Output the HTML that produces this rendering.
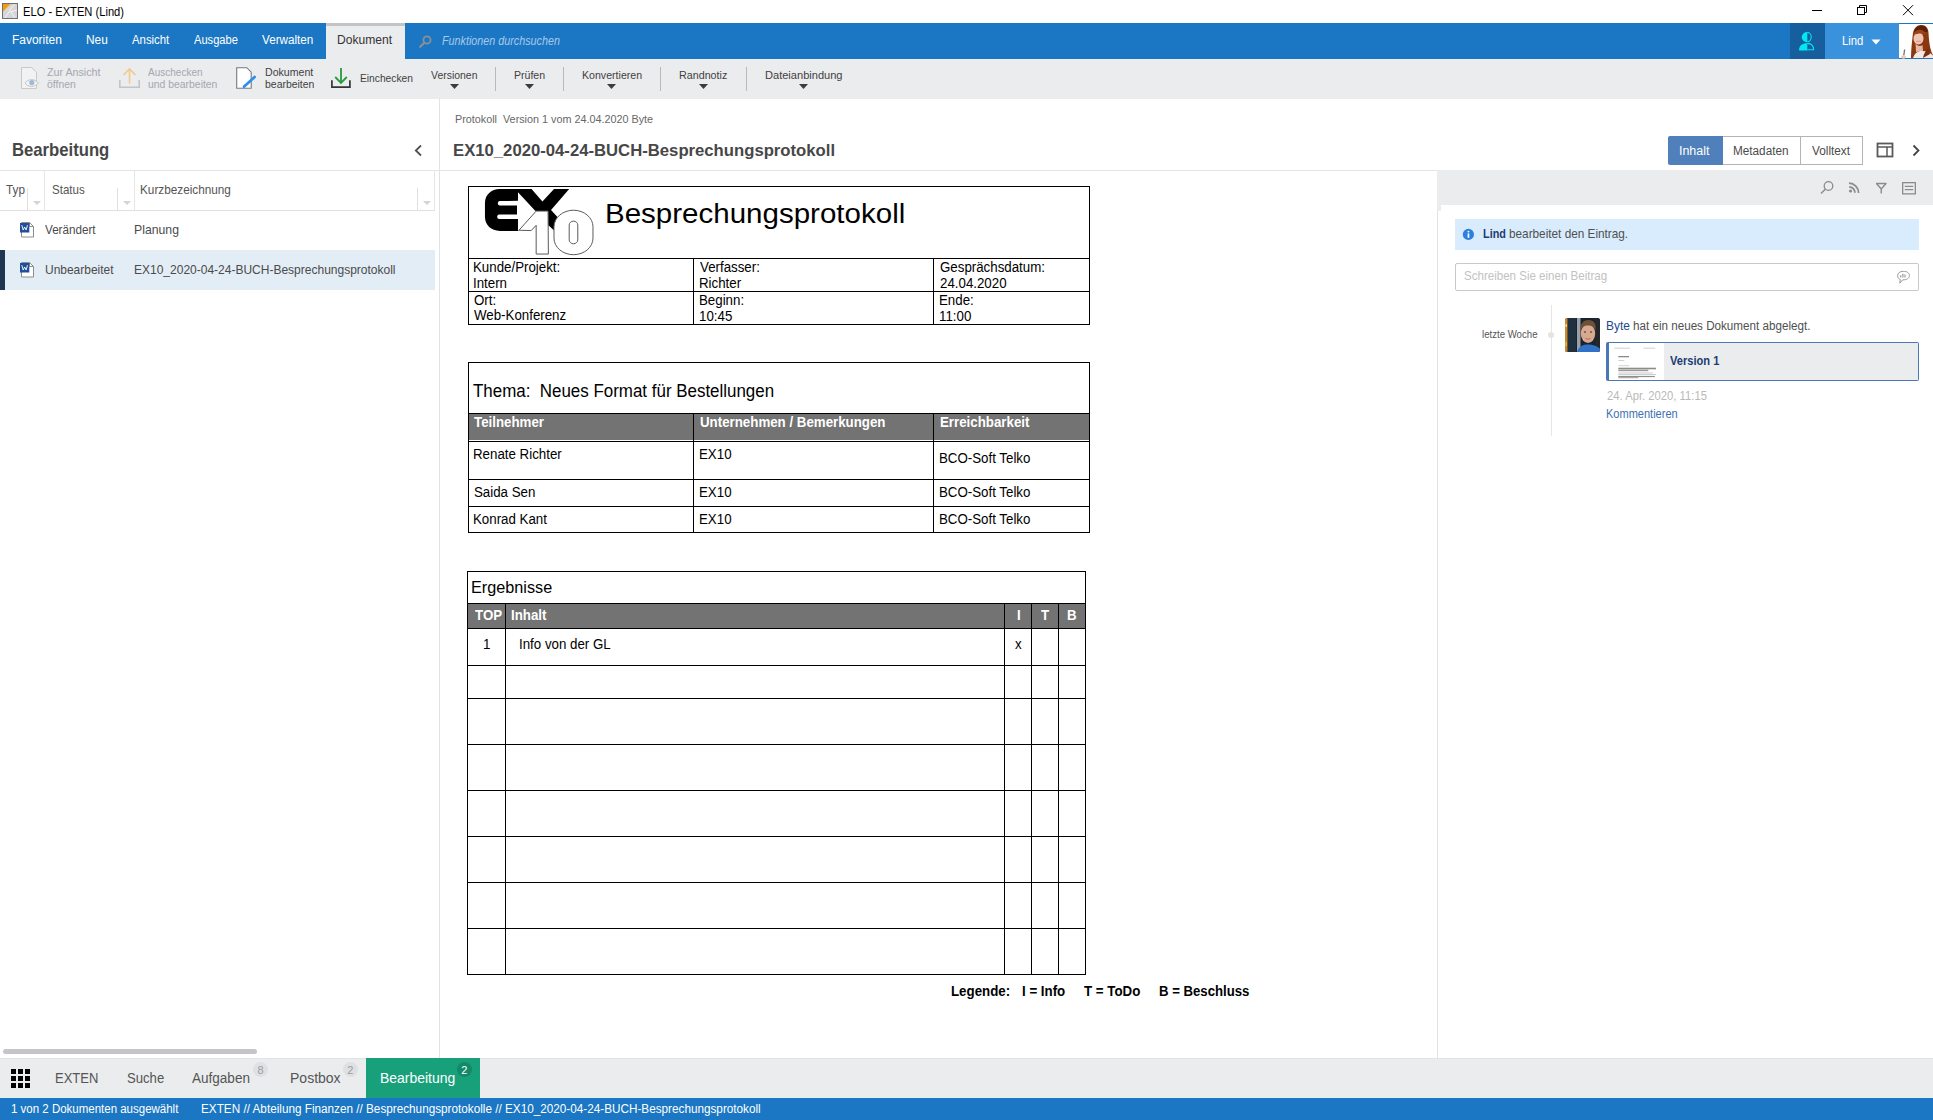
<!DOCTYPE html>
<html><head><meta charset="utf-8"><title>ELO - EXTEN (Lind)</title>
<style>
html,body{margin:0;padding:0;}
body{width:1933px;height:1120px;position:relative;overflow:hidden;background:#fff;font-family:"Liberation Sans",sans-serif;}
.t{position:absolute;white-space:pre;line-height:0;transform-origin:0 0;}
svg{position:absolute;overflow:visible;}
</style></head><body>
<svg style="left:2px;top:3px" width="16" height="16" viewBox="0 0 16 16">
<rect x="0.5" y="0.5" width="15" height="15" fill="#d6d6d6" stroke="#707070" stroke-width="1"/>
<path d="M1 1 H8.5 L1 8.5 Z" fill="#f39c12"/>
<path d="M3 15 L10 4 M8 9 L15 7 M10 4 L13 1.5 M9 9 L13 15" stroke="#f4f4f4" stroke-width="1" fill="none"/>
</svg>
<div class="t" style="left:22.59px;top:12.00px;font-size:12.3px;color:#000;transform:scaleX(0.9067)">ELO - EXTEN (Lind)</div>
<div style="position:absolute;left:1812px;top:10px;width:10px;height:1px;background:#000;"></div>
<svg style="left:1856px;top:5px" width="12" height="11" viewBox="0 0 12 11">
<rect x="1.5" y="2.5" width="7" height="7" fill="none" stroke="#000" stroke-width="1"/>
<path d="M3.5 2.5 V0.5 H10.5 V7.5 H8.5" fill="none" stroke="#000" stroke-width="1"/>
</svg>
<svg style="left:1902px;top:5px" width="12" height="11" viewBox="0 0 12 11">
<path d="M1 0.2 L11 10.2 M11 0.2 L1 10.2" stroke="#000" stroke-width="1" fill="none"/>
</svg>
<div style="position:absolute;left:0px;top:23px;width:1933px;height:36px;background:#1b77c3;"></div>
<div class="t" style="left:11.53px;top:40.00px;font-size:12.3px;color:#ffffff;transform:scaleX(0.9718)">Favoriten</div>
<div class="t" style="left:85.53px;top:40.00px;font-size:12.3px;color:#ffffff;transform:scaleX(0.9669)">Neu</div>
<div class="t" style="left:132.20px;top:40.00px;font-size:12.3px;color:#ffffff;transform:scaleX(0.9240)">Ansicht</div>
<div class="t" style="left:194.00px;top:40.00px;font-size:12.3px;color:#ffffff;transform:scaleX(0.9034)">Ausgabe</div>
<div class="t" style="left:262.00px;top:40.00px;font-size:12.3px;color:#ffffff;transform:scaleX(0.9490)">Verwalten</div>
<div style="position:absolute;left:326px;top:23px;width:79px;height:36px;background:#ebecee;"></div>
<div style="position:absolute;left:326px;top:23px;width:79px;height:3px;background:#c4c4c4;"></div>
<div class="t" style="left:337.32px;top:40.00px;font-size:12.3px;color:#333333;transform:scaleX(0.9815)">Dokument</div>
<svg style="left:419px;top:35px" width="13" height="13" viewBox="0 0 13 13">
<circle cx="8" cy="5" r="3.6" fill="none" stroke="#8c8f93" stroke-width="1.8"/>
<path d="M5.3 7.7 L1.2 11.8" stroke="#8c8f93" stroke-width="2.2" stroke-linecap="round"/>
</svg>
<div class="t" style="left:442.20px;top:40.70px;font-size:12.3px;color:#a9c9ec;font-style:italic;transform:scaleX(0.8752)">Funktionen durchsuchen</div>
<div style="position:absolute;left:1790px;top:23px;width:35px;height:36px;background:#165e9e;"></div>
<svg style="left:1796px;top:30px" width="22" height="22" viewBox="0 0 22 22">
<path d="M11.3 2 A5.6 5.1 0 0 0 11.3 12.2 Z" fill="#00e8f2"/>
<path d="M11.3 2.4 A3.9 4.7 0 0 1 11.3 11.8" fill="none" stroke="#00e8f2" stroke-width="1.1"/>
<path d="M11.3 13.2 C6 13.2 3 15.5 3 20.4 H11.3 Z" fill="#00e8f2"/>
<path d="M11.3 13.4 C15.5 13.6 17.6 15.8 17.6 19.8 H11.3" fill="none" stroke="#00e8f2" stroke-width="1.1"/>
</svg>
<div style="position:absolute;left:1825px;top:23px;width:74px;height:36px;background:#3a91dc;"></div>
<div class="t" style="left:1841.58px;top:41.00px;font-size:12.3px;color:#ffffff;transform:scaleX(0.9192)">Lind</div>
<svg style="left:1871px;top:39px" width="10" height="6" viewBox="0 0 10 6"><path d="M0.5 0.5 H9.5 L5 5.5 Z" fill="#fff"/></svg>
<div style="position:absolute;left:1899px;top:24px;width:34px;height:34px;background:#ffffff;"></div>
<svg style="left:1899px;top:24px" width="34" height="34" viewBox="0 0 34 34">
<path d="M12 34 C12 26 13 17 14 9 C15 4 18 1 22 1 C27 1 29.5 4.5 29.5 9 C30 17 31 26 34 31 V34 Z" fill="#8a3810"/>
<path d="M15 8 C16 3.5 19 1.5 22.5 1.5 C26 1.5 28.5 4 28.5 8 Z" fill="#5e1f06"/>
<ellipse cx="19.5" cy="14.5" rx="5" ry="6" fill="#efc6b4"/>
<path d="M14.5 11 C15.5 7 18 5.5 21.5 5.8 C24.5 6 26 8 26.5 10.5 C23 9 18.5 9.5 14.5 11 Z" fill="#9a4518"/>
<path d="M16.5 19 C18 22 21 23 23.5 21 L24 27 L17 28 Z" fill="#e7b8a5"/>
<rect x="17" y="16.8" width="5" height="1.3" rx="0.6" fill="#e09a9a"/>
<path d="M14 34 C15.5 29.5 18.5 27 23 27 C28 27 31.5 29 34 31.5 V34 Z" fill="#f3e8e6"/>
<path d="M24 34 C25 29 27 26 29.5 24 L31 30 Z" fill="#7a2e0a"/>
<path d="M5.6 25.5 L4.8 31.5" stroke="#6a6e77" stroke-width="1.3"/>
<ellipse cx="4.5" cy="33" rx="2.6" ry="1.8" fill="#f0c9bb"/>
</svg>
<div style="position:absolute;left:0px;top:59px;width:1933px;height:40px;background:#ebecee;"></div>
<svg style="left:20px;top:66px" width="22" height="24" viewBox="0 0 22 24">
<path d="M1.5 1.5 H11.5 L16.5 6 V22.5 H1.5 Z" fill="#f2f2f3" stroke="#c9c9c9" stroke-width="1"/>
<path d="M5 17 C8 12.5 15 12.5 18.5 17 C15 21.5 8 21.5 5 17 Z" fill="#f3f3f3" stroke="#c5c5c5" stroke-width="1"/>
<circle cx="11.8" cy="16.6" r="2.6" fill="#9dbbd8"/>
</svg>
<div class="t" style="left:47.30px;top:71.60px;font-size:11.8px;color:#a6a6ae;transform:scaleX(0.9059)">Zur Ansicht</div>
<div class="t" style="left:47.30px;top:83.50px;font-size:11.8px;color:#a6a6ae;transform:scaleX(0.8837)">öffnen</div>
<svg style="left:118px;top:67px" width="23" height="23" viewBox="0 0 23 23">
<path d="M11.5 2 V16.5 M5.5 8 L11.5 2 L17.5 8" fill="none" stroke="#f2c98e" stroke-width="1.6"/>
<path d="M1.8 13 V20.2 H21.2 V13" fill="none" stroke="#c4c4c4" stroke-width="1.6"/>
</svg>
<div class="t" style="left:148.40px;top:72.30px;font-size:11.8px;color:#a6a6ae;transform:scaleX(0.8492)">Auschecken</div>
<div class="t" style="left:148.40px;top:83.70px;font-size:11.8px;color:#a6a6ae;transform:scaleX(0.8816)">und bearbeiten</div>
<svg style="left:235px;top:66px" width="24" height="24" viewBox="0 0 24 24">
<path d="M1.7 1.7 H11.8 L16.2 6.2 V22.2 H1.7 Z" fill="#ffffff" stroke="#7a7a7a" stroke-width="1.1"/>
<path d="M9.2 20.6 L19.6 10.9" stroke="#2b8ef0" stroke-width="2.7" stroke-linecap="round"/>
<path d="M7.6 22.2 L8.3 20 L9.9 21.6 Z" fill="#2b8ef0"/>
</svg>
<div class="t" style="left:264.50px;top:72.30px;font-size:11.8px;color:#3f3f3f;transform:scaleX(0.8974)">Dokument</div>
<div class="t" style="left:264.50px;top:83.70px;font-size:11.8px;color:#3f3f3f;transform:scaleX(0.8860)">bearbeiten</div>
<svg style="left:330px;top:66px" width="23" height="24" viewBox="0 0 23 24">
<path d="M11 2 V17 M5.2 11 L11 17 L16.8 11" fill="none" stroke="#2c9a3e" stroke-width="1.8"/>
<path d="M1.9 14.2 V21.2 H19.9 V14.2" fill="none" stroke="#353535" stroke-width="1.7"/>
</svg>
<div class="t" style="left:360.30px;top:78.40px;font-size:11.8px;color:#3f3f3f;transform:scaleX(0.8671)">Einchecken</div>
<div class="t" style="left:431.00px;top:75.00px;font-size:11.8px;color:#3f3f3f;transform:scaleX(0.8862)">Versionen</div>
<svg style="left:449.5px;top:84px" width="9" height="5" viewBox="0 0 9 5"><path d="M0 0 H9 L4.5 5 Z" fill="#3c3c3c"/></svg>
<div class="t" style="left:514.20px;top:75.00px;font-size:11.8px;color:#3f3f3f;transform:scaleX(0.8948)">Prüfen</div>
<svg style="left:525.0px;top:84px" width="9" height="5" viewBox="0 0 9 5"><path d="M0 0 H9 L4.5 5 Z" fill="#3c3c3c"/></svg>
<div class="t" style="left:582.00px;top:75.00px;font-size:11.8px;color:#3f3f3f;transform:scaleX(0.8986)">Konvertieren</div>
<svg style="left:607.3px;top:84px" width="9" height="5" viewBox="0 0 9 5"><path d="M0 0 H9 L4.5 5 Z" fill="#3c3c3c"/></svg>
<div class="t" style="left:679.40px;top:75.00px;font-size:11.8px;color:#3f3f3f;transform:scaleX(0.9094)">Randnotiz</div>
<svg style="left:699.0999999999999px;top:84px" width="9" height="5" viewBox="0 0 9 5"><path d="M0 0 H9 L4.5 5 Z" fill="#3c3c3c"/></svg>
<div class="t" style="left:765.00px;top:75.00px;font-size:11.8px;color:#3f3f3f;transform:scaleX(0.9380)">Dateianbindung</div>
<svg style="left:799.0px;top:84px" width="9" height="5" viewBox="0 0 9 5"><path d="M0 0 H9 L4.5 5 Z" fill="#3c3c3c"/></svg>
<div style="position:absolute;left:495.1px;top:67px;width:1px;height:24px;background:#b9b9b9;"></div>
<div style="position:absolute;left:562.9px;top:67px;width:1px;height:24px;background:#b9b9b9;"></div>
<div style="position:absolute;left:659.7px;top:67px;width:1px;height:24px;background:#b9b9b9;"></div>
<div style="position:absolute;left:745.9px;top:67px;width:1px;height:24px;background:#b9b9b9;"></div>
<div style="position:absolute;left:439px;top:99px;width:1px;height:959px;background:#e2e2e2;"></div>
<div style="position:absolute;left:0px;top:170px;width:1933px;height:1px;background:#e4e4e4;"></div>
<div class="t" style="left:11.57px;top:150.40px;font-size:17.9px;color:#474747;font-weight:700;transform:scaleX(0.9322)">Bearbeitung</div>
<svg style="left:412px;top:143px" width="12" height="15" viewBox="0 0 12 15">
<path d="M9 2.5 L3.8 7.5 L9 12.5" fill="none" stroke="#505050" stroke-width="1.8"/>
</svg>
<div style="position:absolute;left:0px;top:210px;width:435px;height:1px;background:#e0e0e0;"></div>
<div style="position:absolute;left:434px;top:170px;width:1px;height:41px;background:#e6e6e6;"></div>
<div style="position:absolute;left:44px;top:170px;width:1px;height:40px;background:#e6e6e6;"></div>
<div style="position:absolute;left:134px;top:170px;width:1px;height:40px;background:#e6e6e6;"></div>
<div style="position:absolute;left:27px;top:188px;width:1px;height:22px;background:#e0e0e0;"></div>
<svg style="left:33px;top:201px" width="8" height="4" viewBox="0 0 8 4"><path d="M0 0 H8 L4 4 Z" fill="#d4d4d4"/></svg>
<div style="position:absolute;left:117px;top:188px;width:1px;height:22px;background:#e0e0e0;"></div>
<svg style="left:123px;top:201px" width="8" height="4" viewBox="0 0 8 4"><path d="M0 0 H8 L4 4 Z" fill="#d4d4d4"/></svg>
<div style="position:absolute;left:417px;top:188px;width:1px;height:22px;background:#e0e0e0;"></div>
<svg style="left:423px;top:201px" width="8" height="4" viewBox="0 0 8 4"><path d="M0 0 H8 L4 4 Z" fill="#d4d4d4"/></svg>
<div class="t" style="left:6.00px;top:190.20px;font-size:12.4px;color:#555555;transform:scaleX(0.9462)">Typ</div>
<div class="t" style="left:51.50px;top:190.20px;font-size:12.4px;color:#555555;transform:scaleX(0.9304)">Status</div>
<div class="t" style="left:140.05px;top:190.20px;font-size:12.4px;color:#555555;transform:scaleX(0.9488)">Kurzbezeichnung</div>
<svg style="left:20px;top:222px" width="15" height="16" viewBox="0 0 15 16">
<path d="M1.5 0.5 H9.5 L13.5 4.5 V15 H1.5 Z" fill="#fff" stroke="#8d8d8d" stroke-width="1"/>
<path d="M9.5 0.5 V4.5 H13.5" fill="none" stroke="#8d8d8d" stroke-width="1"/>
<rect x="0" y="1" width="9.3" height="9.5" fill="#1f4f9a"/>
<path d="M1.8 3.2 L3.2 8 L4.65 5 L6.1 8 L7.5 3.2" fill="none" stroke="#fff" stroke-width="0.9"/>
</svg>
<div class="t" style="left:45.00px;top:230.00px;font-size:12.6px;color:#4b4b4b;transform:scaleX(0.9254)">Verändert</div>
<div class="t" style="left:134.03px;top:230.00px;font-size:12.6px;color:#4b4b4b;transform:scaleX(0.9731)">Planung</div>
<div style="position:absolute;left:0px;top:250px;width:435px;height:40px;background:#e3edf6;"></div>
<div style="position:absolute;left:0px;top:250px;width:5px;height:40px;background:#1f3552;"></div>
<svg style="left:20px;top:262px" width="15" height="16" viewBox="0 0 15 16">
<path d="M1.5 0.5 H9.5 L13.5 4.5 V15 H1.5 Z" fill="#fff" stroke="#8d8d8d" stroke-width="1"/>
<path d="M9.5 0.5 V4.5 H13.5" fill="none" stroke="#8d8d8d" stroke-width="1"/>
<rect x="0" y="1" width="9.3" height="9.5" fill="#1f4f9a"/>
<path d="M1.8 3.2 L3.2 8 L4.65 5 L6.1 8 L7.5 3.2" fill="none" stroke="#fff" stroke-width="0.9"/>
</svg>
<div class="t" style="left:45.00px;top:269.60px;font-size:12.6px;color:#4b4b4b;transform:scaleX(0.9502)">Unbearbeitet</div>
<div class="t" style="left:134.05px;top:269.60px;font-size:12.6px;color:#4b4b4b;transform:scaleX(0.9530)">EX10_2020-04-24-BUCH-Besprechungsprotokoll</div>
<div style="position:absolute;left:3px;top:1049px;width:254px;height:5px;background:#c3c5c8;border-radius:3px"></div>
<div class="t" style="left:454.50px;top:118.80px;font-size:11.8px;color:#676767;transform:scaleX(0.9154)">Protokoll  Version 1 vom 24.04.2020 Byte</div>
<div class="t" style="left:453.46px;top:149.80px;font-size:16.1px;color:#474747;font-weight:700;transform:scaleX(1.0368)">EX10_2020-04-24-BUCH-Besprechungsprotokoll</div>
<div style="position:absolute;left:1722px;top:136px;width:141px;height:29px;background:#ffffff;box-sizing:border-box;border:1px solid #b4b4b4"></div>
<div style="position:absolute;left:1800px;top:136px;width:1px;height:29px;background:#b4b4b4;"></div>
<div style="position:absolute;left:1668px;top:136px;width:55px;height:29px;background:#4f80bb;border-radius:2px 0 0 2px"></div>
<div class="t" style="left:1678.99px;top:151.00px;font-size:12.3px;color:#ffffff;transform:scaleX(1.0113)">Inhalt</div>
<div class="t" style="left:1732.54px;top:151.00px;font-size:12.3px;color:#4b4b4b;transform:scaleX(0.9551)">Metadaten</div>
<div class="t" style="left:1812.00px;top:151.00px;font-size:12.3px;color:#4b4b4b;transform:scaleX(0.9595)">Volltext</div>
<svg style="left:1876px;top:142px" width="18" height="16" viewBox="0 0 18 16">
<rect x="1.5" y="1.5" width="15" height="13" fill="none" stroke="#5a5a5a" stroke-width="1.8"/>
<path d="M1.5 5 H16.5 M11 5 V14.5" stroke="#5a5a5a" stroke-width="1.5"/>
</svg>
<svg style="left:1910px;top:143px" width="12" height="15" viewBox="0 0 12 15">
<path d="M3.5 2.5 L8.5 7.5 L3.5 12.5" fill="none" stroke="#454545" stroke-width="1.8"/>
</svg>
<div style="position:absolute;left:1437px;top:170px;width:496px;height:35px;background:#ebecee;"></div>
<div style="position:absolute;left:1437px;top:205px;width:1px;height:853px;background:#e2e2e2;"></div>
<div style="position:absolute;left:1437px;top:205px;width:4px;height:6px;background:#ebecee;"></div>
<svg style="left:1819px;top:180px" width="16" height="16" viewBox="0 0 16 16">
<circle cx="9.5" cy="6" r="4.3" fill="none" stroke="#8b8b8b" stroke-width="1.3"/>
<path d="M6.5 9 L2 13.5" stroke="#8b8b8b" stroke-width="1.4"/>
</svg>
<svg style="left:1846px;top:180px" width="16" height="16" viewBox="0 0 16 16">
<circle cx="4.5" cy="11" r="1.6" fill="#8b8b8b"/>
<path d="M3.2 6.8 A6 6 0 0 1 9 12.8 M3 3.2 A9.8 9.8 0 0 1 12.6 13" fill="none" stroke="#8b8b8b" stroke-width="1.7"/>
</svg>
<svg style="left:1874px;top:180px" width="16" height="16" viewBox="0 0 16 16">
<path d="M2.5 3.5 H12 L7.25 9 Z M7.25 9 V13.5" fill="none" stroke="#8b8b8b" stroke-width="1.4" stroke-linejoin="round"/>
</svg>
<svg style="left:1901px;top:180px" width="17" height="16" viewBox="0 0 17 16">
<rect x="1.65" y="2.65" width="12.7" height="11.2" fill="none" stroke="#8b8b8b" stroke-width="1.3"/>
<path d="M3.8 6.3 H12.2 M3.8 9.6 H12.2" stroke="#8b8b8b" stroke-width="1.3"/>
</svg>
<div style="position:absolute;left:1455px;top:219px;width:464px;height:31px;background:#d9ecfd;"></div>
<svg style="left:1462px;top:228px" width="13" height="13" viewBox="0 0 13 13">
<circle cx="6.4" cy="6.4" r="5.6" fill="#2d7fde"/>
<rect x="5.6" y="5.4" width="1.7" height="4.4" fill="#fff"/>
<circle cx="6.45" cy="3.6" r="0.95" fill="#fff"/>
</svg>
<div class="t" style="left:1482.80px;top:234.00px;font-size:12.4px;color:#1c3d73;font-weight:700;transform:scaleX(0.8757)">Lind</div>
<div class="t" style="left:1508.90px;top:234.00px;font-size:12.4px;color:#505050;transform:scaleX(0.9501)">bearbeitet den Eintrag.</div>
<div style="position:absolute;left:1455px;top:263px;width:464px;height:28px;background:#ffffff;box-sizing:border-box;border:1px solid #c9c9c9;border-radius:2px"></div>
<div class="t" style="left:1463.50px;top:276.00px;font-size:12.4px;color:#c2c2c2;transform:scaleX(0.9322)">Schreiben Sie einen Beitrag</div>
<svg style="left:1895px;top:268px" width="16" height="17" viewBox="0 0 16 17">
<path d="M8.3 3.3 C5 3.3 2.6 5 2.6 7.8 C2.6 9.8 3.8 11 5.3 11.4 L4.8 15.2 L7.6 11.9 C11.6 11.9 14.4 10.4 14.4 7.6 C14.4 5 12 3.3 8.3 3.3 Z" fill="#fff" stroke="#9a9a9a" stroke-width="1"/>
<path d="M5.7 7.3 V9.6 M7.9 5.8 V9.6 M10 6.6 V9.6" stroke="#9a9a9a" stroke-width="1.2"/>
</svg>
<div style="position:absolute;left:1551px;top:305px;width:1px;height:131px;background:#e6e6e6;"></div>
<div style="position:absolute;left:1548px;top:332px;width:6px;height:6px;border-radius:50%;background:#e3e3e3"></div>
<div class="t" style="left:1481.50px;top:334.00px;font-size:10.8px;color:#555555;transform:scaleX(0.8922)">letzte Woche</div>
<svg style="left:1565px;top:318px" width="35" height="34" viewBox="0 0 35 34">
<defs><clipPath id="av"><rect x="0" y="0" width="35" height="34" rx="2.5"/></clipPath></defs>
<g clip-path="url(#av)">
<rect width="35" height="34" fill="#182430"/>
<rect x="0" y="0" width="2.5" height="34" fill="#c98a2a"/>
<rect x="0.5" y="6" width="1.5" height="3" fill="#f3d36a"/><rect x="0.5" y="24" width="1.5" height="4" fill="#e6b040"/>
<rect x="3" y="0" width="8" height="34" fill="#1f3040"/>
<rect x="12" y="0" width="3.5" height="34" fill="#9aa0a6"/>
<rect x="30" y="0" width="5" height="34" fill="#23272b"/>
<path d="M12 34 C14 28 18 26.5 23 26.5 C28 26.5 33 28.5 35 31 V34 Z" fill="#2f72c8"/>
<ellipse cx="23" cy="15.5" rx="7.2" ry="9.5" fill="#d9a98f"/>
<path d="M15.5 12 C15 5 19 2 23.5 2 C29 2 31.5 6 30.5 12 C29 8 25 7 21 7.5 C18.5 8 16.5 10 15.5 12 Z" fill="#6e5038"/>
<ellipse cx="20" cy="14" rx="1.1" ry="0.7" fill="#4a3a30"/><ellipse cx="26" cy="14" rx="1.1" ry="0.7" fill="#4a3a30"/>
<path d="M20.5 20.5 Q23 22 25.5 20.5" stroke="#a86b5a" stroke-width="0.9" fill="none"/>
</g></svg>
<div class="t" style="left:1605.73px;top:326.00px;font-size:12.3px;color:#1d4a8c;transform:scaleX(0.9719)">Byte</div>
<div class="t" style="left:1633.00px;top:326.00px;font-size:12.3px;color:#505050;transform:scaleX(0.9470)">hat ein neues Dokument abgelegt.</div>
<div style="position:absolute;left:1606px;top:342px;width:313px;height:39px;background:#4a78b7;border-radius:2px"></div>
<div style="position:absolute;left:1608.7px;top:343.3px;width:309px;height:36.4px;background:#ebecee;"></div>
<div style="position:absolute;left:1608.7px;top:343.3px;width:55.3px;height:36.4px;background:#ffffff;"></div>
<svg style="left:1608.7px;top:343.3px" width="55" height="36" viewBox="0 0 55 36">
<g>
<rect x="5.3" y="4.8" width="15.7" height="0.6" fill="#b0b0b0"/><rect x="34.3" y="4.8" width="12" height="0.6" fill="#b0b0b0"/>
<rect x="9.3" y="13" width="10.7" height="1.3" fill="#8a8a8a"/><rect x="9.3" y="17" width="6" height="0.6" fill="#b5b5b5"/>
<rect x="9.3" y="22.5" width="11" height="0.6" fill="#b5b5b5"/>
<rect x="9.3" y="24.7" width="37.7" height="1.6" fill="#8c8c8c"/><rect x="9.3" y="26.6" width="30" height="1.6" fill="#9a9a9a"/>
<rect x="9.3" y="29.7" width="34.5" height="0.6" fill="#aaaaaa"/><rect x="9.3" y="31.4" width="37.7" height="0.6" fill="#b0b0b0"/>
<rect x="9.3" y="32.9" width="36.5" height="1.2" fill="#8e8e8e"/><rect x="9.3" y="34.2" width="20" height="1" fill="#999"/>
</g></svg>
<div class="t" style="left:1670.00px;top:361.20px;font-size:12.6px;color:#1c3d73;font-weight:700;transform:scaleX(0.8804)">Version 1</div>
<div class="t" style="left:1606.50px;top:395.50px;font-size:12.3px;color:#b9b9b9;transform:scaleX(0.9154)">24. Apr. 2020, 11:15</div>
<div class="t" style="left:1605.60px;top:413.70px;font-size:12.3px;color:#3e70b4;transform:scaleX(0.8960)">Kommentieren</div>
<div style="position:absolute;left:0px;top:1058px;width:1933px;height:40px;background:#ebecee;"></div>
<div style="position:absolute;left:0px;top:1058px;width:1933px;height:1px;background:#e2e3e5;"></div>
<svg style="left:11px;top:1069px" width="20" height="20" viewBox="0 0 20 20"><g fill="#000">
<rect x="0" y="0" width="5" height="5"/><rect x="7" y="0" width="5" height="5"/><rect x="14" y="0" width="5" height="5"/>
<rect x="0" y="7" width="5" height="5"/><rect x="7" y="7" width="5" height="5"/><rect x="14" y="7" width="5" height="5"/>
<rect x="0" y="14" width="5" height="5"/><rect x="7" y="14" width="5" height="5"/><rect x="14" y="14" width="5" height="5"/>
</g></svg>
<div style="position:absolute;left:366px;top:1058px;width:114px;height:40px;background:#18a07a;"></div>
<div class="t" style="left:54.56px;top:1079.00px;font-size:13.8px;color:#555555;transform:scaleX(0.9424)">EXTEN</div>
<div class="t" style="left:126.50px;top:1079.00px;font-size:13.8px;color:#555555;transform:scaleX(0.9506)">Suche</div>
<div class="t" style="left:192.00px;top:1079.00px;font-size:13.8px;color:#555555;transform:scaleX(0.9811)">Aufgaben</div>
<div class="t" style="left:289.68px;top:1079.00px;font-size:13.8px;color:#555555;transform:scaleX(1.0152)">Postbox</div>
<div class="t" style="left:379.79px;top:1079.00px;font-size:13.8px;color:#ffffff;transform:scaleX(1.0105)">Bearbeitung</div>
<div style="position:absolute;left:253.0px;top:1062px;width:15px;height:15px;border-radius:50%;background:#dfe0e3"></div>
<div class="t" style="left:257.50px;top:1070.00px;font-size:11px;color:#9c9c9c">8</div>
<div style="position:absolute;left:342.8px;top:1062px;width:15px;height:15px;border-radius:50%;background:#dfe0e3"></div>
<div class="t" style="left:347.30px;top:1070.00px;font-size:11px;color:#9c9c9c">2</div>
<div style="position:absolute;left:456.7px;top:1062px;width:15px;height:15px;border-radius:50%;background:#13896a"></div>
<div class="t" style="left:461.20px;top:1070.00px;font-size:11px;color:#ffffff">2</div>
<div style="position:absolute;left:0px;top:1098px;width:1933px;height:22px;background:#1b77c3;"></div>
<div class="t" style="left:11.00px;top:1109.00px;font-size:12.0px;color:#ffffff;transform:scaleX(0.9576)">1 von 2 Dokumenten ausgewählt</div>
<div class="t" style="left:201.00px;top:1109.00px;font-size:12.0px;color:#ffffff;transform:scaleX(0.9780)">EXTEN // Abteilung Finanzen // Besprechungsprotokolle // EX10_2020-04-24-BUCH-Besprechungsprotokoll</div>
<div style="position:absolute;left:468px;top:186px;width:622px;height:1px;background:#000;"></div>
<div style="position:absolute;left:468px;top:258px;width:622px;height:1px;background:#000;"></div>
<div style="position:absolute;left:468px;top:291px;width:622px;height:1px;background:#000;"></div>
<div style="position:absolute;left:468px;top:324px;width:622px;height:1px;background:#000;"></div>
<div style="position:absolute;left:468px;top:186px;width:1px;height:139px;background:#000;"></div>
<div style="position:absolute;left:1089px;top:186px;width:1px;height:139px;background:#000;"></div>
<div style="position:absolute;left:693px;top:258px;width:1px;height:67px;background:#000;"></div>
<div style="position:absolute;left:933px;top:258px;width:1px;height:67px;background:#000;"></div>
<svg style="left:478px;top:184px" width="122" height="74" viewBox="0 0 1846 1120">
<path d="M330 75 L810 75 L975 265 L1150 75 L1380 75 L1105 395 L1230 530 L1170 720 L1060 620 L1060 410 L880 410 L865 405 L605 125 L605 255 L330 258 C290 260 290 325 330 325 L590 325 L590 462 L320 462 C280 465 280 530 320 530 L605 530 L605 700 L620 710 L330 710 C200 710 105 620 105 500 L105 290 C105 160 200 75 330 75 Z" fill="#000"/>
<path d="M880 410 L1060 410 L1065 1060 L880 1060 L880 625 L805 705 L620 700 Z" fill="#fff" stroke="#585858" stroke-width="15" stroke-linejoin="round"/>
<rect x="1150" y="397" width="590" height="673" rx="295" ry="250" fill="#fff" stroke="#585858" stroke-width="15"/>
<rect x="1380" y="562" width="130" height="343" rx="65" ry="60" fill="#fff" stroke="#585858" stroke-width="15"/>
</svg>
<div class="t" style="left:604.81px;top:213.80px;font-size:27px;color:#000;transform:scaleX(1.0932)">Besprechungsprotokoll</div>
<div class="t" style="left:472.65px;top:266.70px;font-size:14px;color:#000;transform:scaleX(0.9500)">Kunde/Projekt:</div>
<div class="t" style="left:472.65px;top:282.60px;font-size:14px;color:#000;transform:scaleX(0.9500)">Intern</div>
<div class="t" style="left:473.60px;top:299.70px;font-size:14px;color:#000;transform:scaleX(0.9500)">Ort:</div>
<div class="t" style="left:473.60px;top:315.40px;font-size:14px;color:#000;transform:scaleX(0.9500)">Web-Konferenz</div>
<div class="t" style="left:700.20px;top:266.80px;font-size:14px;color:#000;transform:scaleX(0.9500)">Verfasser:</div>
<div class="t" style="left:699.25px;top:282.80px;font-size:14px;color:#000;transform:scaleX(0.9500)">Richter</div>
<div class="t" style="left:699.25px;top:299.70px;font-size:14px;color:#000;transform:scaleX(0.9500)">Beginn:</div>
<div class="t" style="left:699.25px;top:315.60px;font-size:14px;color:#000;transform:scaleX(0.9500)">10:45</div>
<div class="t" style="left:940.20px;top:266.70px;font-size:14px;color:#000;transform:scaleX(0.9500)">Gesprächsdatum:</div>
<div class="t" style="left:940.20px;top:282.60px;font-size:14px;color:#000;transform:scaleX(0.9500)">24.04.2020</div>
<div class="t" style="left:939.25px;top:299.60px;font-size:14px;color:#000;transform:scaleX(0.9500)">Ende:</div>
<div class="t" style="left:939.25px;top:315.50px;font-size:14px;color:#000;transform:scaleX(0.9500)">11:00</div>
<div style="position:absolute;left:468px;top:362px;width:622px;height:1px;background:#000;"></div>
<div style="position:absolute;left:468px;top:413px;width:622px;height:1px;background:#000;"></div>
<div style="position:absolute;left:469px;top:414px;width:620px;height:26px;background:#737373;"></div>
<div style="position:absolute;left:468px;top:441px;width:622px;height:1px;background:#000;"></div>
<div style="position:absolute;left:468px;top:479px;width:622px;height:1px;background:#000;"></div>
<div style="position:absolute;left:468px;top:506px;width:622px;height:1px;background:#000;"></div>
<div style="position:absolute;left:468px;top:532px;width:622px;height:1px;background:#000;"></div>
<div style="position:absolute;left:468px;top:362px;width:1px;height:171px;background:#000;"></div>
<div style="position:absolute;left:1089px;top:362px;width:1px;height:171px;background:#000;"></div>
<div style="position:absolute;left:693px;top:413px;width:1px;height:120px;background:#000;"></div>
<div style="position:absolute;left:933px;top:413px;width:1px;height:120px;background:#000;"></div>
<div class="t" style="left:473.00px;top:390.80px;font-size:17.5px;color:#000;transform:scaleX(0.9674)">Thema:  Neues Format für Bestellungen</div>
<div class="t" style="left:473.60px;top:422.00px;font-size:14px;color:#fff;font-weight:700;transform:scaleX(0.9500)">Teilnehmer</div>
<div class="t" style="left:700.00px;top:422.00px;font-size:14px;color:#fff;font-weight:700;transform:scaleX(0.9500)">Unternehmen / Bemerkungen</div>
<div class="t" style="left:939.90px;top:422.00px;font-size:14px;color:#fff;font-weight:700;transform:scaleX(0.9500)">Erreichbarkeit</div>
<div class="t" style="left:472.65px;top:454.20px;font-size:14px;color:#000;transform:scaleX(0.9500)">Renate Richter</div>
<div class="t" style="left:699.05px;top:454.20px;font-size:14px;color:#000;transform:scaleX(0.9500)">EX10</div>
<div class="t" style="left:938.95px;top:457.60px;font-size:14px;color:#000;transform:scaleX(0.9500)">BCO-Soft Telko</div>
<div class="t" style="left:473.60px;top:491.80px;font-size:14px;color:#000;transform:scaleX(0.9500)">Saida Sen</div>
<div class="t" style="left:699.05px;top:491.80px;font-size:14px;color:#000;transform:scaleX(0.9500)">EX10</div>
<div class="t" style="left:938.95px;top:491.80px;font-size:14px;color:#000;transform:scaleX(0.9500)">BCO-Soft Telko</div>
<div class="t" style="left:472.65px;top:519.00px;font-size:14px;color:#000;transform:scaleX(0.9500)">Konrad Kant</div>
<div class="t" style="left:699.05px;top:519.00px;font-size:14px;color:#000;transform:scaleX(0.9500)">EX10</div>
<div class="t" style="left:938.95px;top:519.00px;font-size:14px;color:#000;transform:scaleX(0.9500)">BCO-Soft Telko</div>
<div style="position:absolute;left:467px;top:571px;width:619px;height:1px;background:#000;"></div>
<div style="position:absolute;left:467px;top:603px;width:619px;height:1px;background:#000;"></div>
<div style="position:absolute;left:468px;top:604px;width:617px;height:24px;background:#737373;"></div>
<div style="position:absolute;left:467px;top:628px;width:619px;height:1px;background:#000;"></div>
<div style="position:absolute;left:467px;top:665px;width:619px;height:1px;background:#000;"></div>
<div style="position:absolute;left:467px;top:698px;width:619px;height:1px;background:#000;"></div>
<div style="position:absolute;left:467px;top:744px;width:619px;height:1px;background:#000;"></div>
<div style="position:absolute;left:467px;top:790px;width:619px;height:1px;background:#000;"></div>
<div style="position:absolute;left:467px;top:836px;width:619px;height:1px;background:#000;"></div>
<div style="position:absolute;left:467px;top:882px;width:619px;height:1px;background:#000;"></div>
<div style="position:absolute;left:467px;top:928px;width:619px;height:1px;background:#000;"></div>
<div style="position:absolute;left:467px;top:974px;width:619px;height:1px;background:#000;"></div>
<div style="position:absolute;left:467px;top:571px;width:1px;height:404px;background:#000;"></div>
<div style="position:absolute;left:1085px;top:571px;width:1px;height:404px;background:#000;"></div>
<div style="position:absolute;left:505px;top:603px;width:1px;height:372px;background:#000;"></div>
<div style="position:absolute;left:1004px;top:603px;width:1px;height:372px;background:#000;"></div>
<div style="position:absolute;left:1031px;top:603px;width:1px;height:372px;background:#000;"></div>
<div style="position:absolute;left:1058px;top:603px;width:1px;height:372px;background:#000;"></div>
<div class="t" style="left:471.40px;top:587.00px;font-size:16.3px;color:#000;transform:scaleX(0.9975)">Ergebnisse</div>
<div class="t" style="left:474.60px;top:615.00px;font-size:14px;color:#fff;font-weight:700;transform:scaleX(0.9500)">TOP</div>
<div class="t" style="left:510.60px;top:615.00px;font-size:14px;color:#fff;font-weight:700;transform:scaleX(0.9500)">Inhalt</div>
<div class="t" style="left:1016.58px;top:615.00px;font-size:14px;color:#fff;font-weight:700;transform:scaleX(0.9500)">I</div>
<div class="t" style="left:1040.72px;top:615.00px;font-size:14px;color:#fff;font-weight:700;transform:scaleX(0.9500)">T</div>
<div class="t" style="left:1067.25px;top:615.00px;font-size:14px;color:#fff;font-weight:700;transform:scaleX(0.9500)">B</div>
<div class="t" style="left:482.73px;top:643.70px;font-size:14px;color:#000;transform:scaleX(0.9500)">1</div>
<div class="t" style="left:519.15px;top:643.70px;font-size:14px;color:#000;transform:scaleX(0.9500)">Info von der GL</div>
<div class="t" style="left:1014.67px;top:643.70px;font-size:14px;color:#000;transform:scaleX(0.9500)">x</div>
<div class="t" style="left:951.10px;top:991.20px;font-size:14px;color:#000;font-weight:700;transform:scaleX(0.9500)">Legende:</div>
<div class="t" style="left:1021.50px;top:991.20px;font-size:14px;color:#000;font-weight:700;transform:scaleX(0.9500)">I = Info</div>
<div class="t" style="left:1083.60px;top:991.20px;font-size:14px;color:#000;font-weight:700;transform:scaleX(0.9500)">T = ToDo</div>
<div class="t" style="left:1158.90px;top:991.20px;font-size:14px;color:#000;font-weight:700;transform:scaleX(0.9407)">B = Beschluss</div>
</body></html>
